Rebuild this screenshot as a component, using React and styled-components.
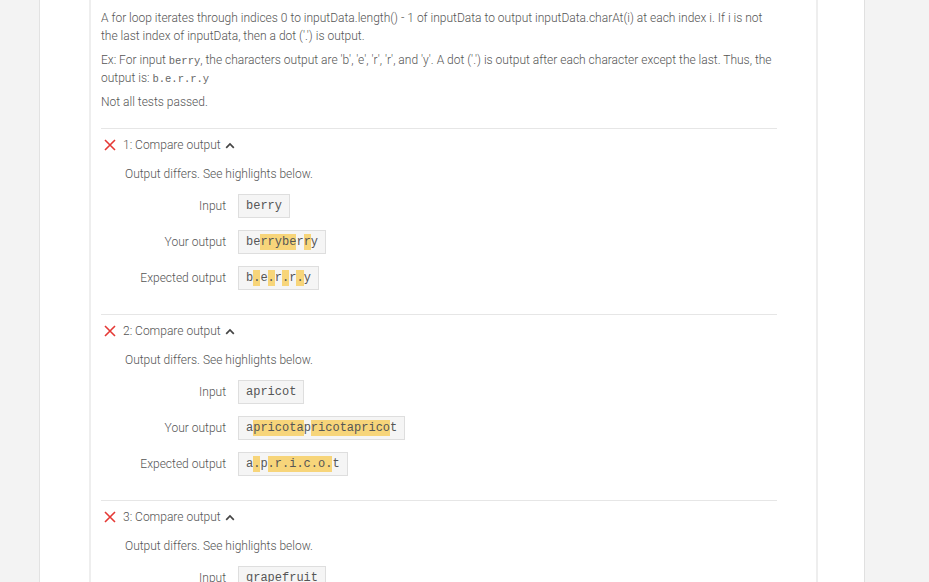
import styled, { createGlobalStyle } from "styled-components"

const GlobalStyle = createGlobalStyle`
    body {
        margin: 0;
        background: #f3f3f3;
        font-family: Roboto, "Liberation Sans", sans-serif;
        color: #555;
    }
`

const Page = styled.div`
    display: flex;
    min-height: 100vh;
    padding-left: 39px;
    overflow: hidden;
`

const Panel = styled.div`
    display: flex;
    width: 825px;
    padding: 0 46px 0 49px;
    box-sizing: border-box;
    background: #fff;
    border-left: 1px solid #e2e2e2;
    box-shadow: 1px 0 0 #e0e0e0;
`

const Column = styled.main`
    width: 730px;
    box-sizing: border-box;
    padding: 9px 39px 0 10px;
    border-left: 2px solid #eeeeee;
    border-right: 2px solid #eeeeee;
`

const Para = styled.p`
    margin: 0 0 ${(p) => p.$gap ?? 6}px;
    font-size: 12px;
    font-weight: 300;
    line-height: 18px;
    color: #555;
`

const InlineCode = styled.code`
    font-family: "Liberation Mono", monospace;
    font-size: 10.5px;
    font-weight: 400;
    line-height: 1;
    color: #666;
`

const TestBlock = styled.section`
    border-top: 1px solid #e6e6e6;
    padding: 7px 0 24px;
    &:first-of-type {
        margin-top: 17px;
    }
`

const TestHeader = styled.div`
    display: flex;
    align-items: center;
    gap: 6px;
    font-size: 12px;
    font-weight: 300;
    line-height: 18px;
    color: #555;
`

const Chevron = styled.svg`
    margin-left: -2px;
`

const TestBody = styled.div`
    padding-left: 24px;
`

const Note = styled.div`
    margin-top: 11px;
    font-size: 12px;
    font-weight: 300;
    line-height: 18px;
`

const Rows = styled.div`
    display: grid;
    grid-template-columns: 101px auto;
    column-gap: 12px;
    row-gap: 12px;
    margin-top: 11px;
`

const Label = styled.div`
    align-self: center;
    text-align: right;
    font-size: 12px;
    font-weight: 300;
    color: #555;
`

const OutputBox = styled.pre`
    justify-self: start;
    margin: 0;
    padding: 3px 7px;
    border: 1px solid #dedede;
    background: #f5f5f5;
    font-family: "Liberation Mono", monospace;
    font-size: 12px;
    line-height: 16px;
    color: #555;
`

const Mark = styled.span`
    display: inline-block;
    line-height: 16px;
    background: ${(p) => (p.$on ? "#f7d57a" : "transparent")};
`

function FailIcon() {
    return (
        <svg width="14" height="14" viewBox="0 0 14 14" style={{ marginLeft: 2 }}>
            <path d="M2 2 L12 12 M12 2 L2 12" stroke="#e53935" strokeWidth="1.6" fill="none" />
        </svg>
    )
}

function Highlighted({ parts }) {
    return (
        <OutputBox>
            {parts.map(([text, on], i) => (
                <Mark key={i} $on={on}>{text}</Mark>
            ))}
        </OutputBox>
    )
}

const tests = [
    {
        n: 1,
        input: "berry",
        yours: [["be", false], ["rrybe", true], ["r", false], ["r", true], ["y", false]],
        expected: [["b", false], [".", true], ["e", false], [".", true], ["r", false], [".", true], ["r", false], [".", true], ["y", false]],
    },
    {
        n: 2,
        input: "apricot",
        yours: [["a", false], ["pricota", true], ["p", false], ["ricotaprico", true], ["t", false]],
        expected: [["a", false], [".", true], ["p", false], [".r.i.c.o.", true], ["t", false]],
    },
    {
        n: 3,
        input: "grapefruit",
        yours: [["grapefruitgrapefruit", false]],
        expected: [["g.r.a.p.e.f.r.u.i.t", false]],
    },
]

function TestCase({ test }) {
    return (
        <TestBlock>
            <TestHeader>
                <FailIcon />
                <span>{test.n}: Compare output</span>
                <Chevron width="10" height="7" viewBox="0 0 10 7">
                    <path d="M1.2 5.8 L5 2 L8.8 5.8" stroke="#444" strokeWidth="1.7" fill="none" />
                </Chevron>
            </TestHeader>
            <TestBody>
                <Note>Output differs. See highlights below.</Note>
                <Rows>
                    <Label>Input</Label>
                    <OutputBox>{test.input}</OutputBox>
                    <Label>Your output</Label>
                    <Highlighted parts={test.yours} />
                    <Label>Expected output</Label>
                    <Highlighted parts={test.expected} />
                </Rows>
            </TestBody>
        </TestBlock>
    )
}

export default function App() {
    return (
        <>
            <GlobalStyle />
            <Page>
                <Panel>
                    <Column>
                        <Para>
                            A for loop iterates through indices 0 to inputData.length() - 1 of inputData to output
                            inputData.charAt(i) at each index i. If i is not the last index of inputData, then a dot
                            ('.') is output.
                        </Para>
                        <Para>
                            Ex: For input <InlineCode>berry</InlineCode>, the characters output are 'b', 'e', 'r', 'r',
                            and 'y'. A dot ('.') is output after each character except the last. Thus, the output is:{" "}
                            <InlineCode>b.e.r.r.y</InlineCode>
                        </Para>
                        <Para $gap={0}>Not all tests passed.</Para>
                        {tests.map((t) => (
                            <TestCase key={t.n} test={t} />
                        ))}
                    </Column>
                </Panel>
            </Page>
        </>
    )
}
